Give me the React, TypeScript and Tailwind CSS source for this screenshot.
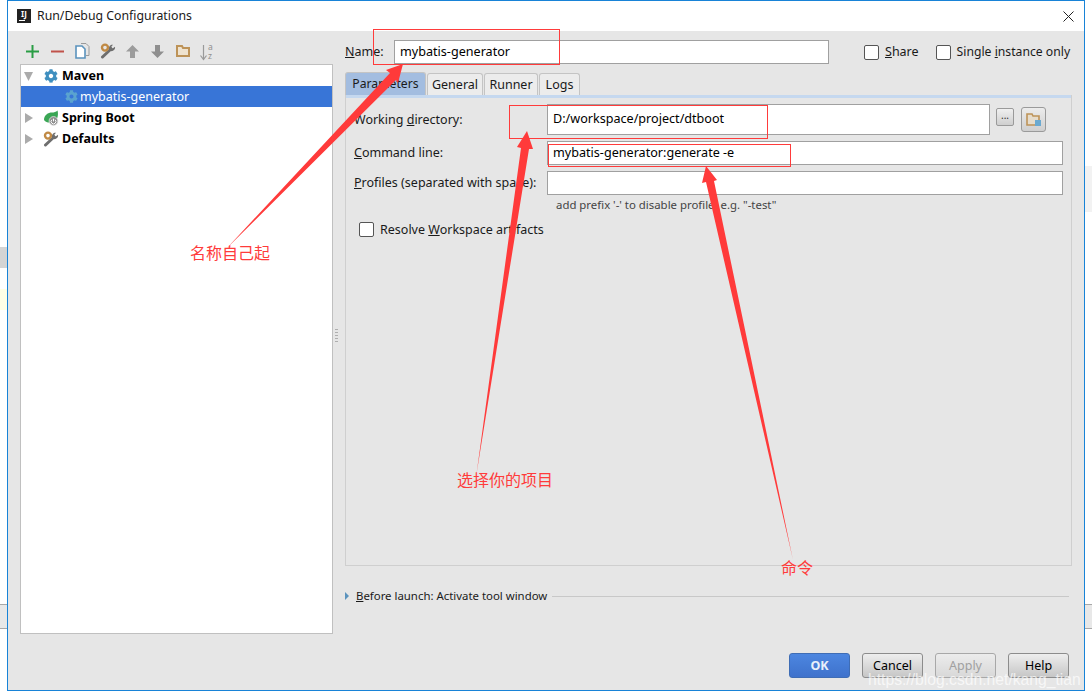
import { FaCog } from "react-icons/fa";

const uiFont = "font-['Noto_Sans',sans-serif]";

function WrenchGear({ size = 16 }: { size?: number }) {
  return (
    <svg width={size} height={size} viewBox="0 0 16 16">
      <path d="M2.5 14 L11 6" stroke="#6e6e6e" strokeWidth="3" strokeLinecap="round" />
      <path d="M9 6.5 C8.5 3.5 10.5 1.5 13 1.8 L11.3 3.8 L12.6 5.4 L15 3.8 C15.6 6.5 13 8.8 10.5 8 Z" fill="#6e6e6e" />
      <circle cx="5" cy="4.6" r="3" fill="#e6e6e6" fillOpacity="0" stroke="#c08a45" strokeWidth="2.4" />
    </svg>
  );
}

function SpringIcon() {
  return (
    <svg width="16" height="16" viewBox="0 0 16 16">
      <path d="M1 10 C1 5 5 2.5 9 2.5 C11 2.5 13 2 14.5 0.5 C15.5 4 15 9 12 11 C9 13 3.5 13.5 1 10 Z" fill="#3aa655" />
      <circle cx="10.5" cy="11" r="4.4" fill="#8d8d8d" stroke="#e6e6e6" strokeWidth="0.8" />
      <path d="M10.5 8.6 V11.4 M8.9 9.7 A2.4 2.4 0 1 0 12.1 9.7" fill="none" stroke="#fff" strokeWidth="1" />
    </svg>
  );
}

function Triangle({ open }: { open?: boolean }) {
  return (
    <svg width="10" height="10" viewBox="0 0 10 10">
      <path d={open ? "M0 1 H9 L4.5 10 Z" : "M1 0 L9 5 L1 10 Z"} fill="#ababab" />
    </svg>
  );
}

function Toolbar() {
  return (
    <div className="flex h-[33px] items-center pt-[7px]">
      <div className="flex h-[25px] w-[25px] items-center justify-center">
        <svg width="13" height="13" viewBox="0 0 13 13"><path d="M6.5 0 V13 M0 6.5 H13" stroke="#2a9d45" strokeWidth="2" /></svg>
      </div>
      <div className="flex h-[25px] w-[25px] items-center justify-center">
        <svg width="13" height="13" viewBox="0 0 13 13"><path d="M0 6.5 H13" stroke="#c0524a" strokeWidth="2" /></svg>
      </div>
      <div className="flex h-[25px] w-[25px] items-center justify-center">
        <svg width="15" height="16" viewBox="0 0 15 16">
          <path d="M6 0.5 H11 L14 3.5 V12.5 H11" fill="#e6e6e6" stroke="#9a9a9a" />
          <path d="M1 3 H7 L10 6 V15 H1 Z" fill="#fff" stroke="#5b93bd" strokeWidth="1.6" />
        </svg>
      </div>
      <div className="flex h-[25px] w-[25px] items-center justify-center">
        <WrenchGear />
      </div>
      <div className="flex h-[25px] w-[25px] items-center justify-center">
        <svg width="13" height="13" viewBox="0 0 13 13"><path d="M6.5 0 L13 6.5 H9 V13 H4 V6.5 H0 Z" fill="#9c9c9c" /></svg>
      </div>
      <div className="flex h-[25px] w-[25px] items-center justify-center">
        <svg width="13" height="13" viewBox="0 0 13 13"><path d="M6.5 13 L13 6.5 H9 V0 H4 V6.5 H0 Z" fill="#8f8f8f" /></svg>
      </div>
      <div className="flex h-[25px] w-[25px] items-center justify-center">
        <svg width="14" height="12" viewBox="0 0 14 12"><path d="M1 1 H6 L7 3 H13 V11 H1 Z" fill="#efe3cf" stroke="#bd9358" strokeWidth="2" /></svg>
      </div>
      <div className="flex h-[25px] w-[25px] items-center justify-center">
        <svg width="15" height="19" viewBox="0 0 15 19">
          <path d="M3.5 3 V17 M0.5 13.5 L3.5 17.5 L6.5 13.5" fill="none" stroke="#9a9a9a" strokeWidth="1.2" />
          <text x="8" y="8" fontSize="8.5" fill="#8f8f8f" fontFamily="Noto Sans">a</text>
          <text x="8" y="17" fontSize="8.5" fill="#8f8f8f" fontFamily="Noto Sans">z</text>
        </svg>
      </div>
    </div>
  );
}

function TreeRow({ children, selected }: { children: React.ReactNode; selected?: boolean }) {
  return (
    <div className={`flex h-[21px] items-center ${selected ? "bg-[#3875d7] text-white" : "text-black"}`}>
      {children}
    </div>
  );
}

function Tree() {
  return (
    <div className="h-[570px] w-[313px] border border-[#c0c0c0] bg-white text-[12.5px] leading-none">
      <TreeRow>
        <span className="ml-[3px] w-[20px]"><Triangle open /></span>
        <FaCog className="h-[14px] w-[14px] text-[#3f8fbf]" />
        <b className="ml-[4px] pt-[2px]">Maven</b>
      </TreeRow>
      <TreeRow selected>
        <FaCog className="ml-[44px] h-[13px] w-[13px] text-[#5aa3cf]" />
        <span className="ml-[2px] pt-[2px]">mybatis-generator</span>
      </TreeRow>
      <TreeRow>
        <span className="ml-[3px] w-[19px]"><Triangle /></span>
        <SpringIcon />
        <b className="ml-[3px] pt-[2px]">Spring Boot</b>
      </TreeRow>
      <TreeRow>
        <span className="ml-[3px] w-[19px]"><Triangle /></span>
        <WrenchGear />
        <b className="ml-[3px] pt-[2px]">Defaults</b>
      </TreeRow>
    </div>
  );
}

function Check({ className = "" }: { className?: string }) {
  return <span className={`block h-[15px] w-[15px] rounded-[2px] border border-[#555] bg-white ${className}`} />;
}

function TextInput({ value, className = "" }: { value?: string; className?: string }) {
  return (
    <div className={`flex shrink-0 items-center border border-[#a0a0a0] bg-white pl-[5px] text-[12.6px] text-black ${className}`}>
      {value}
    </div>
  );
}

function Tab({ label, active, className = "" }: { label: string; active?: boolean; className?: string }) {
  return (
    <div
      className={`flex items-center justify-center rounded-t-[3px] border border-b-0 border-[#c4c4c4] ${
        active ? "h-[23px] bg-[#a3bde0] text-[12.2px]" : "h-[22px] bg-[#ececec] pt-[2px] text-[12.5px]"
      } ${className}`}
    >
      {label}
    </div>
  );
}

function Form() {
  return (
    <div className="h-[471px] border border-t-0 border-[#cfcfcf]">
      <div className="h-[3px] bg-[#c5d8ef]" />
      <div className="flex h-[31px] items-center mt-[6px] ml-[201px]">
        <TextInput value="D:/workspace/project/dtboot" className="h-[31px] w-[443px]" />
        <button className="ml-[6px] mb-[6px] flex h-[18px] w-[18px] items-center justify-center rounded-[2px] border border-[#9a9a9a] bg-gradient-to-b from-[#f0f0f0] to-[#cfcfcf] pb-[4px] text-[10px] leading-none text-[#333]">
          ...
        </button>
        <button className="ml-[7px] mt-[-1px] flex h-[25px] w-[25px] items-center justify-center rounded-[3px] border border-[#9a9a9a] bg-gradient-to-b from-[#ececec] to-[#cfcfcf]">
          <svg width="15" height="15" viewBox="0 0 15 15">
            <path d="M1 2 H6 L7 4 H13 V13 H1 Z" fill="#e6dccb" stroke="#bd9358" strokeWidth="1.6" />
            <rect x="9" y="8" width="6" height="6" fill="#6aa9d0" />
          </svg>
        </button>
      </div>
      <div className="mt-[6px] flex">
        <TextInput value="mybatis-generator:generate -e" className="ml-[201px] h-[24px] w-[516px]" />
      </div>
      <div className="mt-[6px] flex">
        <TextInput className="ml-[201px] h-[24px] w-[516px]" />
      </div>
      <p className="ml-[210px] mt-[2px] text-[11.4px] leading-[16px] text-[#444]">add prefix '-' to disable profile, e.g. "-test"</p>
      <label className="ml-[13px] mt-[9px] flex items-center gap-[6px] text-[12.5px] leading-[15px]">
        <Check />
        <span>Resolve <u>W</u>orkspace artifacts</span>
      </label>
    </div>
  );
}

function FooterButton({ label, tone }: { label: string; tone?: "primary" | "disabled" }) {
  const look =
    tone === "primary"
      ? "border-[#3f6db5] bg-gradient-to-b from-[#4c86e0] to-[#3f72cc] font-bold text-[#e8f0fb]"
      : tone === "disabled"
        ? "border-[#a8a8a8] bg-gradient-to-b from-[#ececec] to-[#d8d8d8] text-[#a0a0a0]"
        : "border-[#8c8c8c] bg-gradient-to-b from-[#eeeeee] to-[#c6c6c6] text-black";
  return <button className={`h-[25px] w-[61px] rounded-[3px] border pt-[2px] text-[12.5px] leading-none ${look}`}>{label}</button>;
}

function ConfigPanel() {
  return (
    <div className="relative w-[727px] shrink-0 pt-[9px] text-[#1a1a1a]">
      <div className="flex h-[24px] items-center whitespace-nowrap text-[12.5px]">
        <span className="w-[49px] shrink-0"><u>N</u>ame:</span>
        <TextInput value="mybatis-generator" className="h-[24px] w-[435px]" />
        <span className="ml-[35px]"><Check /></span>
        <span className="ml-[6px]"><u>S</u>hare</span>
        <span className="ml-[17px]"><Check /></span>
        <span className="ml-[6px] text-[12.2px]">Single <u>i</u>nstance only</span>
      </div>
      <div className="mt-[9px] flex h-[22px] items-end gap-[1px]">
        <Tab label="Parameters" active className="w-[81px]" />
        <Tab label="General" className="w-[56px]" />
        <Tab label="Runner" className="w-[54px]" />
        <Tab label="Logs" className="w-[41px]" />
      </div>
      <Form />
      {/* labels sit over the form's left gutter */}
      <div className="absolute left-[9px] top-[73px] whitespace-nowrap text-[12.5px]">
        <p className="flex h-[31px] items-center pt-[2px]"><span>Working <u>d</u>irectory:</span></p>
        <p className="mt-[6px] flex h-[24px] items-center"><span><u>C</u>ommand line:</span></p>
        <p className="mt-[6px] flex h-[24px] items-center"><span><u>P</u>rofiles (separated with space):</span></p>
      </div>
      <div className="mt-[21px] flex h-[18px] items-center whitespace-nowrap text-[11.4px]">
        <svg className="shrink-0" width="4" height="8" viewBox="0 0 4 8"><path d="M0 0 L4 4 L0 8 Z" fill="#5b93bd" /></svg>
        <span className="ml-[7px]"><u>B</u>efore launch: Activate tool window</span>
        <span className="ml-[5px] mr-[3px] h-px min-w-0 flex-1 bg-[#c8c8c8]" />
      </div>
      <div className="mt-[48px] flex w-[724px] justify-end gap-[12px]">
        <FooterButton label="OK" tone="primary" />
        <FooterButton label="Cancel" />
        <FooterButton label="Apply" tone="disabled" />
        <FooterButton label="Help" />
      </div>
    </div>
  );
}

function Annotations() {
  return (
    <>
      <span className="absolute left-[373px] top-[29px] h-[36px] w-[187px] border border-[#ff3b3b]" />
      <span className="absolute left-[509px] top-[105px] h-[34px] w-[259px] border border-[#ff3b3b]" />
      <span className="absolute left-[548px] top-[144px] h-[23px] w-[243px] border border-[#ff3b3b]" />
      <svg className="pointer-events-none absolute left-0 top-0" width="1092" height="698" viewBox="0 0 1092 698">
        <path d="M227 248 L390 73 L386 70 L403 64 L398 83 L396 80 Z" fill="#ff3a3a" />
        <path d="M476.5 474 L521 148 L517 147 L527 131 L533 149 L529 149 Z" fill="#ff3a3a" />
        <path d="M793 560 L706 182 L702 183 L706 166 L717 180 L714 181 Z" fill="#ff3a3a" />
      </svg>
      <div className="absolute font-['Noto_Sans_CJK_SC',sans-serif] text-[16px] leading-none text-[#ff3b3b]">
        <span className="absolute left-[190px] top-[244px] whitespace-nowrap">名称自己起</span>
        <span className="absolute left-[457px] top-[471px] whitespace-nowrap">选择你的项目</span>
        <span className="absolute left-[781px] top-[559px] whitespace-nowrap">命令</span>
      </div>
    </>
  );
}

export default function App() {
  return (
    <div className={`relative h-[698px] w-[1092px] overflow-hidden bg-white ${uiFont}`}>
      {/* bits of the IDE behind the dialog */}
      <div className="absolute left-0 top-[247px] h-[21px] w-[8px] bg-[#d4d4d4]" />
      <div className="absolute left-0 top-[289px] h-[21px] w-[8px] bg-[#ffffe6]" />
      <div className="absolute left-0 top-[604px] h-[25px] w-[8px] border-y border-[#a8a8a8] bg-[#e8e8e8]" />
      <div className="absolute left-[1085px] top-[166px] h-[46px] w-[7px] bg-[#f2f2f2]" />
      <div className="absolute left-[1085px] top-[604px] h-[25px] w-[7px] border-y border-[#a8a8a8] bg-[#e8e8e8]" />

      <div className="absolute left-[7px] top-0 h-[691px] w-[1078px] border border-[#1883d7] bg-[#e6e6e6]">
        <div className="flex h-[30px] items-center bg-white pl-[9px] pr-[9px] text-[12.3px] text-[#1a1a1a]">
          <span className="relative flex h-[14px] w-[14px] justify-center bg-[#222] font-bold text-[8px] leading-[10px] text-white">
            IJ
            <span className="absolute bottom-[2px] left-[2px] h-px w-[6px] bg-white" />
          </span>
          <span className="ml-[6px]">Run/Debug Configurations</span>
          <svg className="ml-auto mr-[1px]" width="11" height="11" viewBox="0 0 11 11">
            <path d="M0.5 0.5 L10.5 10.5 M10.5 0.5 L0.5 10.5" stroke="#222" strokeWidth="1" />
          </svg>
        </div>
        <div className="flex pl-[12px]">
          <div className="w-[313px] shrink-0">
            <Toolbar />
            <Tree />
          </div>
          <div className="flex w-[12px] shrink-0 items-start pl-[2px] pt-[297px]">
            <span className="h-[14px] w-[3px] bg-[radial-gradient(#aaa_35%,transparent_40%)] bg-[length:2px_3px]" />
          </div>
          <ConfigPanel />
        </div>
      </div>

      <Annotations />
      <span className="absolute left-[868px] top-[672px] whitespace-nowrap font-['Liberation_Sans',sans-serif] text-[15.7px] leading-none text-white/70">
        https://blog.csdn.net/kang_tian
      </span>
    </div>
  );
}
